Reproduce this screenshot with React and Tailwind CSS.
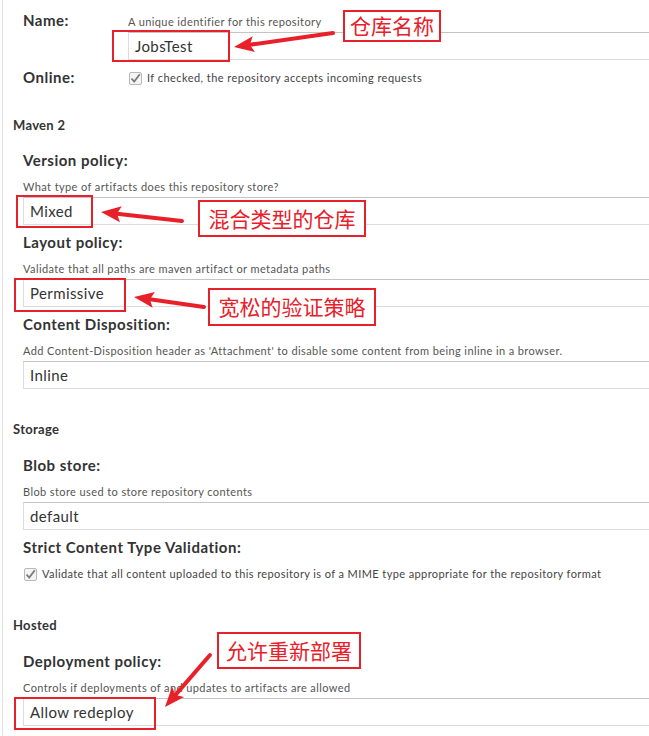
import React from 'react';

const RED = '#e8202a';

function Input({ value }) {
  return (
    <div className="h-[28px] flex items-center pl-[6px] border border-r-0 border-[#dcdcdc] border-t-[#c4c4c4] text-[15px] tracking-[0.4px] text-[#333]">
      {value}
    </div>
  );
}

function Check() {
  return (
    <span className="w-[13px] h-[13px] border border-[#b8b8b8] bg-[#f4f4f4] rounded-[2px] flex items-center justify-center shrink-0">
      <svg width="11" height="11" viewBox="0 0 11 11">
        <path d="M1.5 5.5 L4.2 8.5 L9.8 1.2" fill="none" stroke="#7a7a7a" strokeWidth="1.8" />
      </svg>
    </span>
  );
}

function Field({ label, help, value, className = '' }) {
  return (
    <div className={'pl-[20px] ' + className}>
      <div className="text-[15px] leading-[18px] font-bold tracking-[0.5px] text-[#333]">{label}</div>
      <div className="mt-[11px] text-[11px] leading-[14px] tracking-[0.4px] text-[#555]">{help}</div>
      <div className="mt-[3px]">
        <Input value={value} />
      </div>
    </div>
  );
}

function Section({ title, className = '' }) {
  return (
    <div className={'pl-[10px] text-[13px] leading-[15px] font-bold tracking-[0.3px] text-[#333] ' + className}>{title}</div>
  );
}

function Arrow({ x1, y1, x2, y2 }) {
  // tail (x1,y1) -> head (x2,y2)
  const dx = x2 - x1;
  const dy = y2 - y1;
  const len = Math.sqrt(dx * dx + dy * dy);
  const ux = dx / len;
  const uy = dy / len;
  const px = -uy;
  const py = ux;
  const hl = 20;
  const hw = 8;
  const bx = x2 - ux * hl;
  const by = y2 - uy * hl;
  const pts = `${x2},${y2} ${bx + px * hw},${by + py * hw} ${bx + ux * 4},${by + uy * 4} ${bx - px * hw},${by - py * hw}`;
  return (
    <g>
      <line x1={x1} y1={y1} x2={bx + ux * 4} y2={by + uy * 4} stroke={RED} strokeWidth="4" strokeLinecap="round" />
      <polygon points={pts} fill={RED} />
    </g>
  );
}

function Note({ text, className }) {
  return (
    <div
      className={
        'absolute bg-white border-2 border-[#e8202a] flex items-center justify-center text-[21px] text-[#e8202a] ' +
        className
      }
      style={{ fontFamily: '"Noto Sans CJK SC", sans-serif' }}
    >
      {text}
    </div>
  );
}

export default function App() {
  return (
    <div className="relative w-[649px] h-[736px] overflow-hidden bg-white" style={{ fontFamily: 'Lato, "Open Sans", sans-serif' }}>
      <div className="ml-[2px] border-l border-[#e2e2e2] h-full">
        {/* Name */}
        <div className="flex pt-[11px]">
          <div className="w-[125px] pl-[20px] text-[15px] leading-[18px] font-bold tracking-[0.5px] text-[#333]">Name:</div>
          <div className="flex-1 pt-[4px]">
            <div className="text-[11px] leading-[14px] tracking-[0.4px] text-[#555]">A unique identifier for this repository</div>
            <div className="mt-[3px]">
              <Input value="JobsTest" />
            </div>
          </div>
        </div>

        {/* Online */}
        <div className="flex mt-[8px]">
          <div className="w-[125px] pl-[20px] text-[15px] leading-[18px] font-bold tracking-[0.5px] text-[#333]">Online:</div>
          <div className="flex items-center gap-[5px] pl-[1px] pt-[2px] text-[11px] leading-[14px] tracking-[0.45px] text-[#444]">
            <Check />
            <span>If checked, the repository accepts incoming requests</span>
          </div>
        </div>

        <Section title="Maven 2" className="mt-[32px]" />
        <Field
          className="mt-[18px]"
          label="Version policy:"
          help="What type of artifacts does this repository store?"
          value="Mixed"
        />
        <Field
          className="mt-[8px]"
          label="Layout policy:"
          help="Validate that all paths are maven artifact or metadata paths"
          value="Permissive"
        />
        <Field
          className="mt-[8px]"
          label="Content Disposition:"
          help="Add Content-Disposition header as 'Attachment' to disable some content from being inline in a browser."
          value="Inline"
        />

        <Section title="Storage" className="mt-[33px]" />
        <Field
          className="mt-[19px]"
          label="Blob store:"
          help="Blob store used to store repository contents"
          value="default"
        />
        <div className="pl-[20px] mt-[8px]">
          <div className="text-[15px] leading-[18px] font-bold tracking-[0.5px] text-[#333]">Strict Content Type Validation:</div>
          <div className="mt-[11px] flex items-center gap-[5px] pl-[1px] text-[11px] leading-[14px] tracking-[0.4px] text-[#444]">
            <Check />
            <span>Validate that all content uploaded to this repository is of a MIME type appropriate for the repository format</span>
          </div>
        </div>

        <Section title="Hosted" className="mt-[37px]" />
        <Field
          className="mt-[19px]"
          label="Deployment policy:"
          help="Controls if deployments of and updates to artifacts are allowed"
          value="Allow redeploy"
        />
      </div>

      {/* annotations */}
      <div className="absolute left-[112px] top-[30px] w-[118px] h-[32px] border-2 border-[#e8202a]" />
      <div className="absolute left-[16px] top-[195px] w-[77px] h-[33px] border-2 border-[#e8202a]" />
      <div className="absolute left-[14px] top-[278px] w-[112px] h-[34px] border-2 border-[#e8202a]" />
      <div className="absolute left-[14px] top-[697px] w-[142px] h-[33px] border-2 border-[#e8202a]" />

      <Note text="仓库名称" className="left-[343px] top-[10px] w-[98px] h-[32px]" />
      <Note text="混合类型的仓库" className="left-[198px] top-[200px] w-[168px] h-[37px]" />
      <Note text="宽松的验证策略" className="left-[208px] top-[288px] w-[168px] h-[38px]" />
      <Note text="允许重新部署" className="left-[217px] top-[632px] w-[144px] h-[37px]" />

      <svg className="absolute inset-0 pointer-events-none" width="649" height="736">
        <Arrow x1={333} y1={33} x2={234} y2={47} />
        <Arrow x1={182} y1={221} x2={101} y2={212} />
        <Arrow x1={204} y1={307} x2={134} y2={297} />
        <Arrow x1={210} y1={655} x2={165} y2={707} />
      </svg>
    </div>
  );
}
